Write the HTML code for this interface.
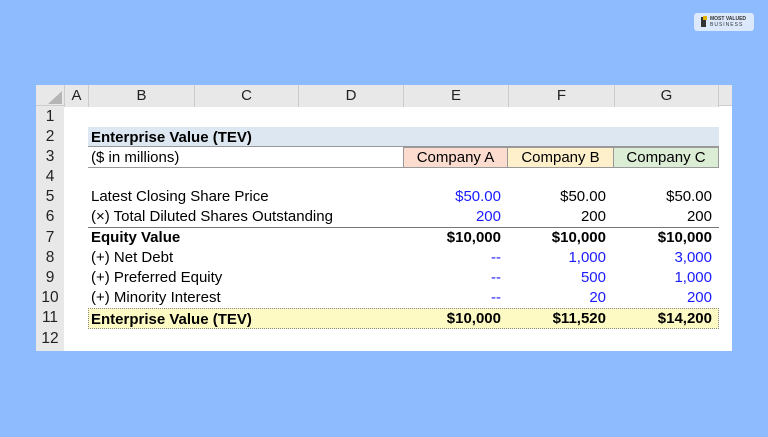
<!DOCTYPE html><html><head><style>
body{margin:0;width:768px;height:437px;background:#8dbbfd;position:relative;overflow:hidden;font-family:"Liberation Sans",Arial,sans-serif;font-size:15px;color:#000}
.s{position:absolute;left:36px;top:85px;width:696px;height:266px;background:#fff}
.a{position:absolute;box-sizing:border-box}
.hd{background:#e8e8e8;color:#222;text-align:center;line-height:22px;font-size:15px}
.rn{left:0;width:28px;text-align:center;color:#222;background:#e8e8e8;font-size:15.5px}
.c{line-height:22px;white-space:nowrap}
.r{text-align:right}
.b{font-weight:bold}
.bl{color:#1a1aff}
.logo{position:absolute;left:694px;top:13px;width:60px;height:18px;background:#dce8fb;border-radius:3px;font-size:5px;line-height:6px;color:#333}
</style></head><body>
<div class="logo"><div class="a" style="left:7px;top:4px;width:5px;height:10px;background:#333"></div><div class="a" style="left:9px;top:3px;width:4px;height:4px;background:#e3b400"></div><div class="a" style="left:16px;top:3px;font-weight:bold">MOST VALUED</div><div class="a" style="left:16px;top:9px;letter-spacing:1px">BUSINESS</div></div>
<div class="s">
<div class="a hd" style="left:0;top:0;width:696px;height:21px;border-bottom:1px solid #ccc"></div>
<div class="a" style="left:0;top:21px;width:28px;height:245px;background:#e8e8e8"></div>
<svg class="a" style="left:12px;top:6px" width="14" height="13"><polygon points="14,0 14,13 0,13" fill="#b5b5b5"/></svg>
<div class="a hd" style="left:28px;top:0;width:24px;border-left:1px solid #ccc">A</div>
<div class="a hd" style="left:52px;top:0;width:106px;border-left:1px solid #ccc">B</div>
<div class="a hd" style="left:158px;top:0;width:104px;border-left:1px solid #ccc">C</div>
<div class="a hd" style="left:262px;top:0;width:105px;border-left:1px solid #ccc">D</div>
<div class="a hd" style="left:367px;top:0;width:105px;border-left:1px solid #ccc">E</div>
<div class="a hd" style="left:472px;top:0;width:106px;border-left:1px solid #ccc">F</div>
<div class="a hd" style="left:578px;top:0;width:105px;border-left:1px solid #ccc;border-right:1px solid #ccc">G</div>
<div class="a c rn" style="top:21px">1</div>
<div class="a c rn" style="top:41px">2</div>
<div class="a c rn" style="top:61px">3</div>
<div class="a c rn" style="top:81px">4</div>
<div class="a c rn" style="top:101px">5</div>
<div class="a c rn" style="top:121px">6</div>
<div class="a c rn" style="top:142px">7</div>
<div class="a c rn" style="top:162px">8</div>
<div class="a c rn" style="top:182px">9</div>
<div class="a c rn" style="top:202px">10</div>
<div class="a c rn" style="top:222px">11</div>
<div class="a c rn" style="top:243px">12</div>
<div class="a c b" style="left:52px;top:42px;width:631px;height:20px;line-height:21px;background:#dde7f2;border-bottom:1px solid #999;padding-left:3px">Enterprise Value (TEV)</div>
<div class="a c" style="left:52px;top:62px;width:315px;height:21px;line-height:21px;border-bottom:1px solid #999;padding-left:3px">($ in millions)</div>
<div class="a c" style="left:367px;top:62px;width:105px;height:21px;line-height:20px;background:#fbdccf;border:1px solid #999;text-align:center">Company A</div>
<div class="a c" style="left:472px;top:62px;width:106px;height:21px;line-height:20px;background:#fff0cc;border:1px solid #999;border-left:none;text-align:center">Company B</div>
<div class="a c" style="left:578px;top:62px;width:105px;height:21px;line-height:20px;background:#dcedd6;border:1px solid #999;border-left:none;text-align:center">Company C</div>
<div class="a c" style="left:55px;top:101px">Latest Closing Share Price</div>
<div class="a c" style="left:55px;top:121px">(×) Total Diluted Shares Outstanding</div>
<div class="a" style="left:52px;top:142px;width:631px;border-top:1px solid #777"></div>
<div class="a c b" style="left:55px;top:142px">Equity Value</div>
<div class="a c" style="left:55px;top:162px">(+) Net Debt</div>
<div class="a c" style="left:55px;top:182px">(+) Preferred Equity</div>
<div class="a c" style="left:55px;top:202px">(+) Minority Interest</div>
<div class="a c b" style="left:52px;top:223px;width:631px;height:21px;line-height:21px;background:#fdfbc3;border:1px dotted #888;padding-left:2px">Enterprise Value (TEV)</div>
<div class="a c r bl" style="left:367px;width:98px;top:101px">$50.00</div>
<div class="a c r" style="left:472px;width:98px;top:101px">$50.00</div>
<div class="a c r" style="left:578px;width:98px;top:101px">$50.00</div>
<div class="a c r bl" style="left:367px;width:98px;top:121px">200</div>
<div class="a c r" style="left:472px;width:98px;top:121px">200</div>
<div class="a c r" style="left:578px;width:98px;top:121px">200</div>
<div class="a c r b" style="left:367px;width:98px;top:142px">$10,000</div>
<div class="a c r b" style="left:472px;width:98px;top:142px">$10,000</div>
<div class="a c r b" style="left:578px;width:98px;top:142px">$10,000</div>
<div class="a c r bl" style="left:367px;width:98px;top:162px">--</div>
<div class="a c r bl" style="left:472px;width:98px;top:162px">1,000</div>
<div class="a c r bl" style="left:578px;width:98px;top:162px">3,000</div>
<div class="a c r bl" style="left:367px;width:98px;top:182px">--</div>
<div class="a c r bl" style="left:472px;width:98px;top:182px">500</div>
<div class="a c r bl" style="left:578px;width:98px;top:182px">1,000</div>
<div class="a c r bl" style="left:367px;width:98px;top:202px">--</div>
<div class="a c r bl" style="left:472px;width:98px;top:202px">20</div>
<div class="a c r bl" style="left:578px;width:98px;top:202px">200</div>
<div class="a c r b" style="left:367px;width:98px;top:223px">$10,000</div>
<div class="a c r b" style="left:472px;width:98px;top:223px">$11,520</div>
<div class="a c r b" style="left:578px;width:98px;top:223px">$14,200</div>
</div>
</body></html>
